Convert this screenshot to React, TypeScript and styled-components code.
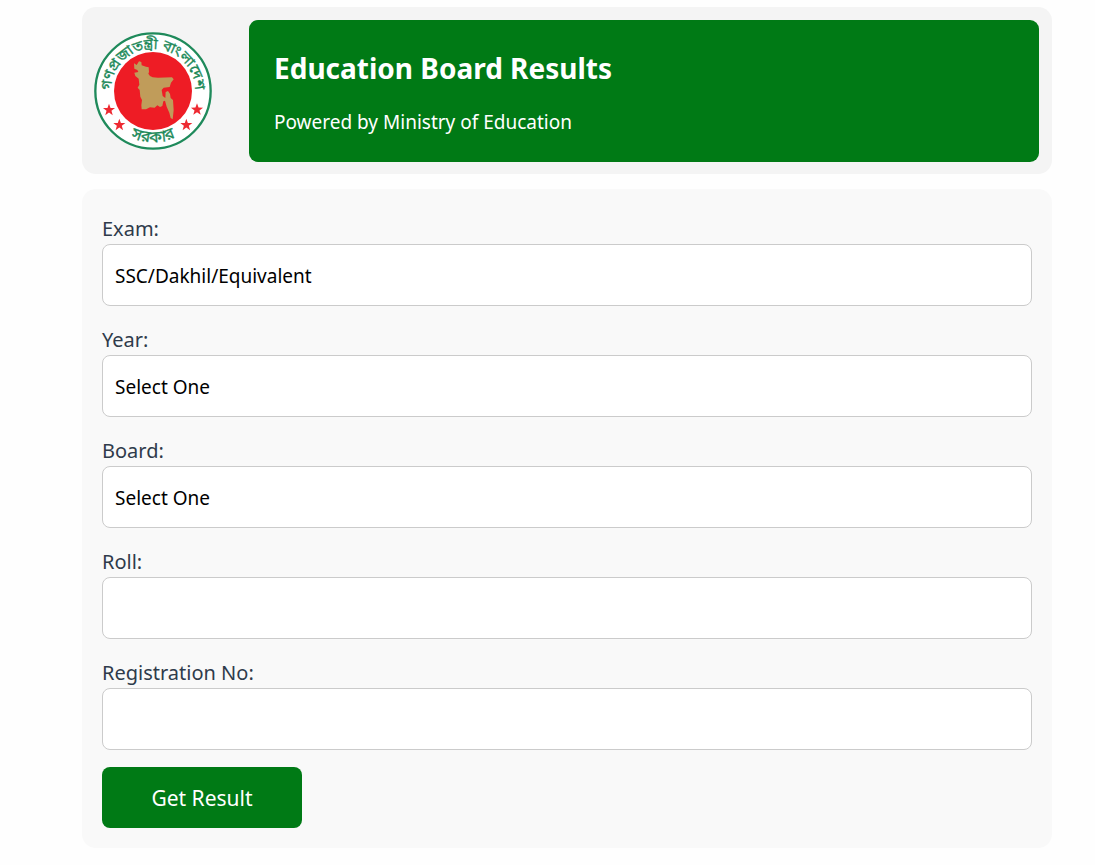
import React from "react";
import styled, { createGlobalStyle } from "styled-components";

const GlobalStyle = createGlobalStyle`
  *, *::before, *::after { box-sizing: border-box; }
  body {
    margin: 0;
    background: #fefefe;
    font-family: "Segoe UI", "Noto Sans", "Open Sans", sans-serif;
  }
`;

const Page = styled.main`
  display: flex;
  flex-direction: column;
  gap: 15px;
  padding: 7px 43px 17px 82px;
`;

const Header = styled.header`
  display: flex;
  align-items: center;
  gap: 37px;
  padding: 13px 13px 12px 12px;
  border-radius: 14px;
  background: #f4f4f4;
`;

const Emblem = styled.svg`
  flex: none;
  width: 118px;
  height: 118px;
`;

const Banner = styled.div`
  flex: 1;
  display: flex;
  flex-direction: column;
  gap: 19px;
  padding: 28px 25px 25px;
  border-radius: 9px;
  background: #007a15;
  color: #fff;
`;

const Title = styled.h1`
  margin: 0;
  font-size: 28px;
  line-height: 40px;
  font-weight: 700;
`;

const Subtitle = styled.p`
  margin: 0;
  font-size: 19px;
  line-height: 30px;
`;

const Form = styled.form`
  display: flex;
  flex-direction: column;
  align-items: flex-start;
  gap: 17px;
  padding: 25px 20px 20px;
  border-radius: 14px;
  background: #f9f9f9;
`;

const Fields = styled.div`
  display: flex;
  flex-direction: column;
  gap: 19px;
  width: 100%;
`;

const Field = styled.div`
  display: flex;
  flex-direction: column;
`;

const Label = styled.label`
  font-size: 20px;
  line-height: 30px;
  color: #2f3b4b;
`;

const controlStyle = `
  width: 100%;
  height: 62px;
  padding: 2px 12px 0;
  border: 1px solid #cbcbcb;
  border-radius: 8px;
  background: #fff;
  color: #000;
  font-family: inherit;
  font-size: 19px;
`;

const Select = styled.select`
  ${controlStyle}
  appearance: none;
`;

const Input = styled.input`
  ${controlStyle}
`;

const SubmitButton = styled.button`
  width: 200px;
  height: 61px;
  border: 0;
  border-radius: 8px;
  background: #007a15;
  color: #fff;
  font-family: inherit;
  font-size: 21px;
`;

const SealText = styled.text<{ $size: number }>`
  fill: #1d8a5a;
  font-family: "Noto Sans Bengali", "Noto Sans", sans-serif;
  font-size: ${({ $size }) => $size}px;
`;

const STAR =
  "M0 -19 L4.6 -6.2 L18.1 -5.9 L7.4 2.4 L11.2 15.4 L0 7.8 L-11.2 15.4 L-7.4 2.4 L-18.1 -5.9 L-4.6 -6.2 Z";

const stars = [
  [87, 328],
  [118, 373],
  [351, 327],
  [319, 373],
];

function Seal() {
  return (
    <Emblem viewBox="42 94 354 354" role="img" aria-label="Government seal">
      <defs>
        <path id="seal-top" d="M97.3 303.6 A126 126 0 1 1 340.7 303.6" />
        <path id="seal-bottom" d="M65 271 A154 154 0 0 0 373 271" />
      </defs>
      <circle cx="219" cy="271" r="173" fill="#fff" stroke="#1f8a5b" strokeWidth="7" />
      <circle cx="219" cy="271" r="117" fill="#ee1c25" />
      <path
        fill="#c09c5a"
        transform="translate(144 168)"
        d="M18 20 L26 25 L33 14 L40 16 L41 26 L54 30 L62 32 L63 46 L61 51 L66 58 L74 62 L90 63 L132 62 L137 68 L129 78 L125 91 L107 93 L101 100 L104 118 L112 124 L113 106 L120 103 L126 112 L128 124 L135 130 L137 160 L134 188 L128 184 L124 168 L116 150 L111 132 L106 134 L103 148 L96 151 L88 146 L80 153 L66 152 L54 158 L41 158 L40 146 L42 130 L37 120 L35 100 L29 93 L34 84 L32 66 L22 58 L19 48 L31 46 L28 40 L19 36 Z"
      />
      {stars.map(([x, y]) => (
        <path key={`${x}-${y}`} d={STAR} fill="#ee2a32" transform={`translate(${x} ${y})`} />
      ))}
      <SealText $size={44} stroke="#1d8a5a" textAnchor="middle">
        <textPath href="#seal-top" startOffset="50%">গণপ্রজাতন্ত্রী বাংলাদেশ</textPath>
      </SealText>
      <SealText $size={48} stroke="#1d8a5a" textAnchor="middle">
        <textPath href="#seal-bottom" startOffset="50%">সরকার</textPath>
      </SealText>
    </Emblem>
  );
}

type SelectFieldProps = { id: string; label: string; options: string[] };

function SelectField({ id, label, options }: SelectFieldProps) {
  return (
    <Field>
      <Label htmlFor={id}>{label}</Label>
      <Select id={id} name={id}>
        {options.map((option) => (
          <option key={option}>{option}</option>
        ))}
      </Select>
    </Field>
  );
}

function TextField({ id, label }: { id: string; label: string }) {
  return (
    <Field>
      <Label htmlFor={id}>{label}</Label>
      <Input id={id} name={id} type="text" />
    </Field>
  );
}

export default function App() {
  return (
    <>
      <GlobalStyle />
      <Page>
        <Header>
          <Seal />
          <Banner>
            <Title>Education Board Results</Title>
            <Subtitle>Powered by Ministry of Education</Subtitle>
          </Banner>
        </Header>
        <Form onSubmit={(event) => event.preventDefault()}>
          <Fields>
            <SelectField id="exam" label="Exam:" options={["SSC/Dakhil/Equivalent"]} />
            <SelectField id="year" label="Year:" options={["Select One"]} />
            <SelectField id="board" label="Board:" options={["Select One"]} />
            <TextField id="roll" label="Roll:" />
            <TextField id="registration" label="Registration No:" />
          </Fields>
          <SubmitButton type="submit">Get Result</SubmitButton>
        </Form>
      </Page>
    </>
  );
}
